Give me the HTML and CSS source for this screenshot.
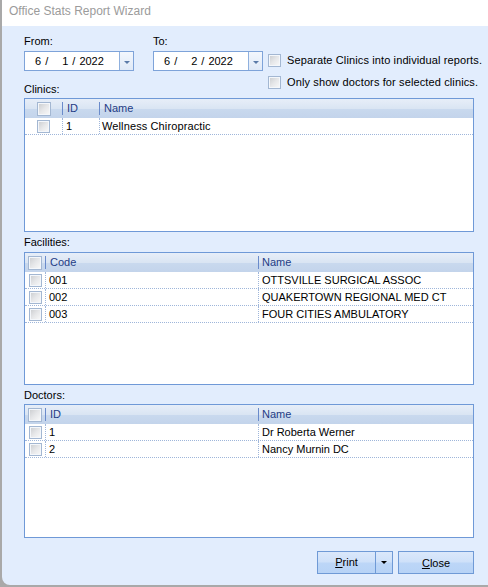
FILE: index.html
```html
<!DOCTYPE html>
<html>
<head>
<meta charset="utf-8">
<link rel="stylesheet" href="styles.css">
</head>
<body>
<div class="window">
  <div class="titlebar">Office Stats Report Wizard</div>
  <div class="content">
    <div class="top">
      <div class="lbl from-lbl">From:</div>
      <div class="lbl to-lbl">To:</div>
      <div class="date from-date"><span class="dtext"><span class="dm">6</span><span class="ds">/</span><span class="dd">1</span><span class="ds">/</span><span class="dy">2022</span></span><span class="dbtn"><i class="tri"></i></span></div>
      <div class="date to-date"><span class="dtext"><span class="dm">6</span><span class="ds">/</span><span class="dd">2</span><span class="ds">/</span><span class="dy">2022</span></span><span class="dbtn"><i class="tri"></i></span></div>
      <div class="options">
        <label class="opt"><span class="chk"></span><span>Separate Clinics into individual reports.</span></label>
        <label class="opt"><span class="chk"></span><span>Only show doctors for selected clinics.</span></label>
      </div>
      <div class="lbl clinics-lbl">Clinics:</div>
    </div>

    <div class="grid g-clinics">
      <div class="ghead">
        <div class="hc cc-chk"><span class="chk"></span></div>
        <i class="sep"></i>
        <div class="hc cc-id">ID</div>
        <i class="sep"></i>
        <div class="hc cc-name">Name</div>
      </div>
      <div class="grow">
        <div class="rc cc-chk"><span class="chk"></span></div>
        <div class="rc cc-id dv">1</div>
        <div class="rc cc-name dv">Wellness Chiropractic</div>
      </div>
    </div>

    <div class="lbl sec-lbl">Facilities:</div>
    <div class="grid g-fac">
      <div class="ghead">
        <div class="hc fc-chk"><span class="chk"></span></div>
        <i class="sep"></i>
        <div class="hc fc-code">Code</div>
        <i class="sep"></i>
        <div class="hc fc-name">Name</div>
      </div>
      <div class="grow">
        <div class="rc fc-chk"><span class="chk"></span></div>
        <div class="rc fc-code dv">001</div>
        <div class="rc fc-name dv">OTTSVILLE SURGICAL ASSOC</div>
      </div>
      <div class="grow">
        <div class="rc fc-chk"><span class="chk"></span></div>
        <div class="rc fc-code dv">002</div>
        <div class="rc fc-name dv">QUAKERTOWN REGIONAL MED CT</div>
      </div>
      <div class="grow">
        <div class="rc fc-chk"><span class="chk"></span></div>
        <div class="rc fc-code dv">003</div>
        <div class="rc fc-name dv">FOUR CITIES AMBULATORY</div>
      </div>
    </div>

    <div class="lbl sec-lbl doc-lbl">Doctors:</div>
    <div class="grid g-doc">
      <div class="ghead">
        <div class="hc fc-chk"><span class="chk"></span></div>
        <i class="sep"></i>
        <div class="hc fc-code">ID</div>
        <i class="sep"></i>
        <div class="hc fc-name">Name</div>
      </div>
      <div class="grow">
        <div class="rc fc-chk"><span class="chk"></span></div>
        <div class="rc fc-code dv">1</div>
        <div class="rc fc-name dv">Dr Roberta Werner</div>
      </div>
      <div class="grow">
        <div class="rc fc-chk"><span class="chk"></span></div>
        <div class="rc fc-code dv">2</div>
        <div class="rc fc-name dv">Nancy Murnin DC</div>
      </div>
    </div>

    <div class="footer">
      <div class="btn split">
        <span class="bmain"><u>P</u>rint</span>
        <span class="bdrop"><i class="tri dark"></i></span>
      </div>
      <div class="btn close"><u>C</u>lose</div>
    </div>
  </div>
</div>
</body>
</html>
```

FILE: styles.css
```css
html, body {
  margin: 0;
  padding: 0;
}
body {
  width: 488px;
  height: 587px;
  background: #a9a9a9;
  font-family: "Liberation Sans", Arial, sans-serif;
  font-size: 11px;
  color: #000;
  overflow: hidden;
}
.window {
  margin-left: 2px;
  width: 486px;
  height: 585px;
  background: #e2edfd;
  border-bottom-left-radius: 8px;
  overflow: hidden;
}
.titlebar {
  height: 26px;
  background: #ffffff;
  color: #9b9b9b;
  font-size: 12px;
  line-height: 22px;
  padding-left: 7px;
  box-sizing: border-box;
}
.content {
  padding: 7px 14px 0 22px;
}
.top {
  display: grid;
  grid-template-columns: 110px 110px 1fr;
  grid-template-rows: 16px 22px 26px;
  column-gap: 19px;
}
.lbl {
  line-height: 16px;
  height: 16px;
}
.from-lbl { grid-column: 1; grid-row: 1; }
.to-lbl { grid-column: 2; grid-row: 1; }
.from-date { grid-column: 1; grid-row: 2; }
.to-date { grid-column: 2; grid-row: 2; }
.clinics-lbl { grid-column: 1; grid-row: 3; align-self: end; }
.options {
  grid-column: 3;
  grid-row: 1 / 4;
  margin-left: -14px;
  padding-top: 17px;
  display: flex;
  flex-direction: column;
  gap: 2px;
}
.opt {
  display: flex;
  align-items: center;
  height: 20px;
  gap: 6px;
  white-space: nowrap;
  letter-spacing: 0.12px;
}
.date {
  margin-top: 2px;
  height: 20px;
  box-sizing: border-box;
  border: 1px solid #7ea3d9;
  background: #fff;
  display: flex;
}
.dtext {
  flex: 1;
  display: flex;
  align-items: center;
  white-space: nowrap;
  padding-left: 10px;
}
.dm { margin-right: 4px; }
.dd { margin-left: 14px; margin-right: 4px; }
.dy { margin-left: 4px; }
.dbtn {
  width: 13px;
  border-left: 1px solid #8fb0de;
  background: linear-gradient(#f3f7fd, #dfe9f7);
  display: flex;
  align-items: center;
  justify-content: center;
}
.tri {
  display: block;
  width: 0;
  height: 0;
  border-left: 3px solid transparent;
  border-right: 3px solid transparent;
  border-top: 3px solid #5a7aa8;
  margin-top: 2px;
}
.tri.dark {
  border-left-width: 3px;
  border-right-width: 3px;
  border-top: 3px solid #000;
  margin-top: 0;
}
.chk {
  display: inline-block;
  width: 13px;
  height: 13px;
  box-sizing: border-box;
  border: 1px solid #a3b7d2;
  box-shadow: inset 0 0 0 1px #f4f7fb;
  background: linear-gradient(135deg, #c9cbce 0%, #e6e7e9 50%, #fafafa 100%);
  flex: none;
}
.grid {
  margin-top: 1px;
  border: 1px solid #6f99d7;
  background: #fff;
  box-sizing: border-box;
}
.g-clinics { height: 134px; }
.g-fac { height: 133px; }
.g-doc { height: 134px; }
.ghead {
  display: flex;
  align-items: center;
  height: 19px;
  background: linear-gradient(#e7eef8 0%, #dae5f3 50%, #c9d9ee 52%, #c3d4eb 100%);
}
.ghead .chk {
  width: 14px;
  height: 14px;
}
.hc {
  color: #1f3c85;
  box-sizing: border-box;
  line-height: 19px;
  display: flex;
  align-items: center;
}
.sep {
  display: block;
  width: 1px;
  height: 13px;
  background: #6a8bcb;
  flex: none;
}
.grow {
  display: flex;
  height: 17px;
  border-bottom: 1px dotted #9fb6da;
  box-sizing: border-box;
}
.rc {
  box-sizing: border-box;
  line-height: 16px;
  display: flex;
  align-items: center;
  white-space: nowrap;
}
.dv {
  border-left: 1px dotted #9fb6da;
}
/* clinic columns */
.cc-chk { width: 37px; justify-content: center; }
.ghead .cc-id { width: 36px; padding-left: 4px; }
.ghead .cc-name { flex: 1; padding-left: 4px; }
.grow .cc-id { width: 37px; padding-left: 3px; }
.grow .cc-name { flex: 1; padding-left: 2px; letter-spacing: 0.12px; }
/* facility / doctor columns */
.fc-chk { width: 20px; justify-content: center; }
.ghead .fc-code { width: 212px; padding-left: 4px; }
.ghead .fc-name { flex: 1; padding-left: 3px; }
.grow .fc-code { width: 213px; padding-left: 3px; }
.grow .fc-name { flex: 1; padding-left: 3px; }
.sec-lbl {
  margin-top: 2px;
  margin-bottom: 2px;
}
.doc-lbl {
  margin-top: 2px;
  margin-bottom: 1px;
}
.footer {
  display: flex;
  justify-content: flex-end;
  gap: 5px;
  margin-top: 13px;
}
.btn {
  height: 23px;
  box-sizing: border-box;
  border: 1px solid #6f9ad6;
  background: linear-gradient(#dbe8fb 0%, #cfe1f9 45%, #bcd6f7 55%, #b7d3f6 100%);
  display: flex;
  align-items: center;
  justify-content: center;
  font-size: 11px;
}
.btn u { text-decoration: underline; }
.split {
  width: 76px;
  justify-content: flex-start;
}
.bmain {
  width: 57px;
  text-align: center;
  line-height: 21px;
}
.bdrop {
  flex: 1;
  height: 100%;
  border-left: 1px solid #6f9ad6;
  display: flex;
  align-items: center;
  justify-content: center;
}
.close {
  width: 76px;
}
```
